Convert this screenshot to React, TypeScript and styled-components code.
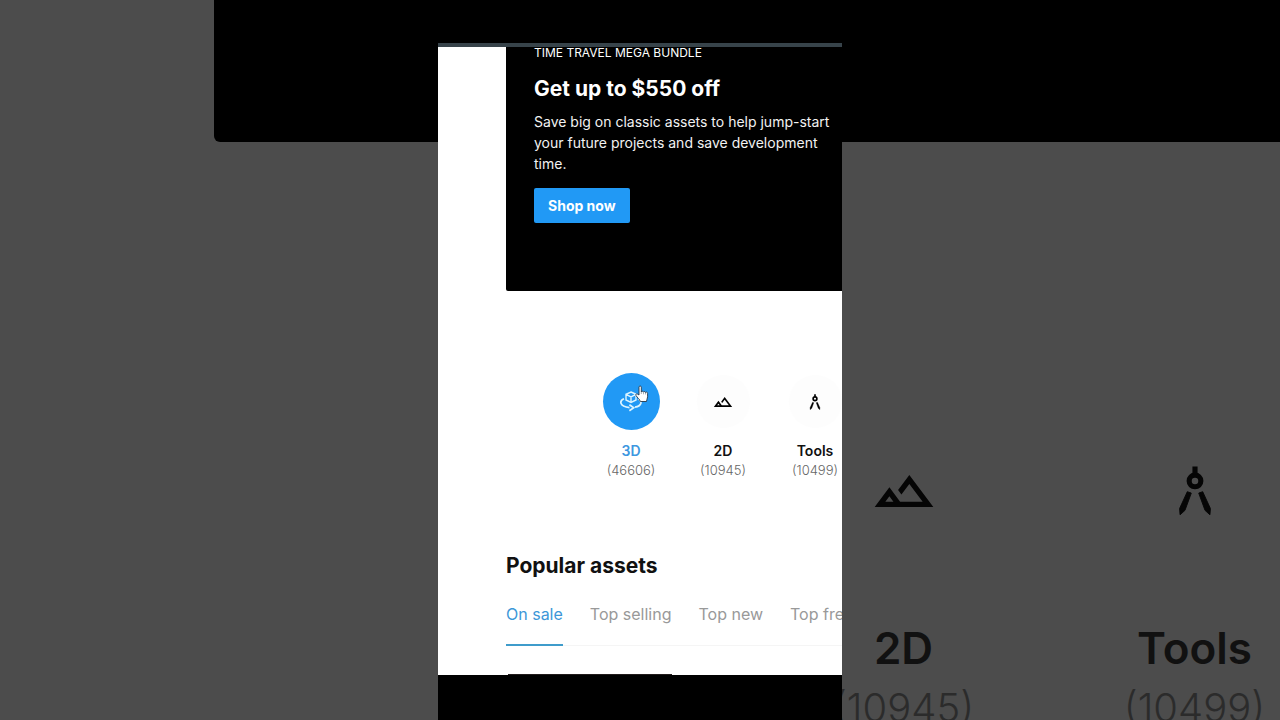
import React from "react";
import styled, { createGlobalStyle } from "styled-components";

const GlobalStyle = createGlobalStyle`
  * { box-sizing: border-box; }
  body {
    margin: 0;
    background: #4c4c4c;
    color: #111;
    font-family: Inter, "Liberation Sans", sans-serif;
  }
  h1, h2, p { margin: 0; }
  a { color: inherit; text-decoration: none; }
`;

const Stage = styled.div`
  display: grid;
  grid-template-columns: minmax(0, 1fr) minmax(0, 404px) minmax(0, 1fr);
  grid-template-rows: minmax(0, 1fr);
  height: 100vh;
  overflow: hidden;
`;

const Side = styled.aside`
  display: flex;
  flex-direction: column;
  min-width: 0;
  overflow: hidden;
`;

const SideBanner = styled.div<{ $start?: boolean }>`
  flex: none;
  height: 142px;
  margin-left: ${(p) => (p.$start ? "214px" : "0")};
  border-bottom-left-radius: ${(p) => (p.$start ? "6px" : "0")};
  background: #000;
`;

const Screen = styled.main`
  display: flex;
  flex-direction: column;
  min-width: 0;
  background: #000;
`;

const TopBar = styled.div`
  flex: none;
  margin-top: 43px;
  height: 4px;
  background: #37434a;
`;

const Page = styled.div`
  flex: 1;
  min-height: 0;
  margin-bottom: 45px;
  padding-left: 68px;
  overflow: hidden;
  background: #fff;
`;

const Banner = styled.section`
  height: 244px;
  padding-left: 28px;
  border-bottom-left-radius: 2px;
  background: #000;
  color: #fff;
`;

const Eyebrow = styled.p`
  font-size: 12px;
  line-height: 12px;
`;

const BannerTitle = styled.h1`
  margin-top: 16px;
  font-size: 21px;
  font-weight: 700;
  line-height: 28px;
`;

const BannerText = styled.p`
  max-width: 304px;
  margin-top: 8px;
  color: #f2f2f2;
  font-size: 14px;
  line-height: 21px;
`;

const ShopButton = styled.button`
  margin-top: 14px;
  height: 35px;
  padding: 0 14px;
  border: 0;
  border-radius: 2px;
  background: #2199f5;
  color: #fff;
  font: 700 14px/20px Inter, "Liberation Sans", sans-serif;
`;

const Categories = styled.nav<{ $large?: boolean }>`
  display: flex;
  flex: none;
  margin-top: ${(p) => (p.$large ? "260px" : "82px")};
  margin-left: ${(p) => (p.$large ? "-84px" : "79px")};
`;

const Category = styled.a<{ $large?: boolean; $active?: boolean }>`
  display: flex;
  flex: none;
  flex-direction: column;
  align-items: center;
  width: ${(p) => (p.$large ? "291px" : "92px")};
  color: ${(p) => (p.$active ? "#3d97e0" : "#111")};
`;

const IconDisc = styled.span<{ $large?: boolean; $active?: boolean }>`
  position: relative;
  display: grid;
  place-items: center;
  width: ${(p) => (p.$large ? "178px" : p.$active ? "57px" : "53px")};
  height: ${(p) => (p.$large ? "178px" : p.$active ? "57px" : "53px")};
  margin: ${(p) => (p.$large || p.$active ? "0" : "2px")};
  border-radius: 50%;
  background: ${(p) => (p.$large ? "transparent" : p.$active ? "#2199f5" : "#fdfdfd")};
  color: ${(p) => (p.$large ? "#050505" : "#000")};
`;

const CategoryName = styled.span<{ $large?: boolean }>`
  margin-top: ${(p) => (p.$large ? "38px" : "11px")};
  font-size: ${(p) => (p.$large ? "44px" : "14px")};
  font-weight: 600;
  line-height: ${(p) => (p.$large ? "60px" : "20px")};
`;

const CategoryCount = styled.span<{ $large?: boolean }>`
  color: ${(p) => (p.$large ? "#2b2b2b" : "#666")};
  font-size: ${(p) => (p.$large ? "40px" : "13px")};
  font-weight: 300;
  line-height: ${(p) => (p.$large ? "60px" : "19px")};
`;

const Pointer = styled.svg`
  position: absolute;
  top: 12px;
  left: 32px;
`;

const SectionTitle = styled.h2`
  margin-top: 72px;
  font-size: 21px;
  font-weight: 700;
  line-height: 28px;
`;

const Tabs = styled.nav`
  display: flex;
  gap: 27px;
  margin-top: 19px;
  box-shadow: inset 0 -1px #f5f5f5;
`;

const Tab = styled.a<{ $active?: boolean }>`
  flex: none;
  height: 47px;
  border-bottom: ${(p) => (p.$active ? "2px solid #3f9ccb" : "0")};
  color: ${(p) => (p.$active ? "#3d97d8" : "#999")};
  font-size: 16px;
  line-height: 30px;
  white-space: nowrap;
`;

const AssetCard = styled.div`
  width: 164px;
  height: 120px;
  margin: 28px 0 0 2px;
  background: #211b1b;
`;

function LandscapeIcon({ size }: { size: number }) {
  return (
    <svg width={size} height={size} viewBox="0 0 24 24" fill="currentColor" aria-hidden="true">
      <path d="m14 6-4.22 5.63 1.25 1.67L14 9.33 19 16h-8.46l-4.01-5.37L1 18h22L14 6zM5 16l1.52-2.03L8.04 16H5z" />
    </svg>
  );
}

function CompassIcon({ size }: { size: number }) {
  return (
    <svg width={size} height={size} viewBox="0 0 24 24" fill="none" stroke="currentColor" aria-hidden="true">
      <circle cx="12" cy="7.7" r="2.5" strokeWidth="2.2" />
      <path d="M12 1.5v3.6" strokeWidth="2.2" />
      <path
        d="m8.7 12.3 1.7.6-2.7 7.400-2.100 1.900-.2-2.700zM15.300 12.300l-1.700.6 2.700 7.400 2.100 1.900.2-2.700z"
        fill="currentColor"
        stroke="currentColor"
        strokeWidth=".4"
      />
    </svg>
  );
}

function RotateCubeIcon({ size }: { size: number }) {
  return (
    <svg width={size} height={size} viewBox="0 0 24 24" fill="none" stroke="#dcf4ff" strokeWidth="1.4" aria-hidden="true">
      <path d="M12 2l5 2.300v5.700l-5 2.400-5-2.400V4.300zM7 4.300l5 2.600 5-2.600M12 6.900v5.500" />
      <path d="M5 8.700C.2 10.800.2 16.400 10.500 17.600M19 8.700c4.400 2.200 4.300 7-3 8.500" strokeWidth="1.700" />
      <path d="m10.400 14.800 4.300 3-4.300 3" strokeWidth="1.700" />
    </svg>
  );
}

function HandPointer() {
  return (
    <Pointer width="14" height="18" viewBox="0 0 14 18" aria-hidden="true">
      <path
        d="M4 10V2.200C4 .6 6.300.6 6.300 2.200V7c.3-1.200 2-1 2.200.2.400-1 2-.8 2.100.4.500-.9 2-.5 2 .7v3.500c0 2-1.100 2.700-1.100 4.700H5.300c-.3-2-3-3.800-4.300-6-.7-1.400.8-2.200 1.700-1.300z"
        fill="#fff"
        stroke="#26394a"
        strokeWidth=".9"
      />
      <path d="M6.300 7v2M8.500 7.500v1.800M10.600 8v1.500" stroke="#26394a" strokeWidth=".4" />
    </Pointer>
  );
}

const categories = [
  { name: "3D", count: "(46606)", Icon: RotateCubeIcon, small: 24, large: 72, active: true },
  { name: "2D", count: "(10945)", Icon: LandscapeIcon, small: 20, large: 64, active: false },
  { name: "Tools", count: "(10499)", Icon: CompassIcon, small: 18, large: 56, active: false },
];

function CategoryList({ large }: { large?: boolean }) {
  const shown = large ? categories.filter((c) => !c.active) : categories;
  return (
    <Categories $large={large} aria-label="Categories">
      {shown.map(({ name, count, Icon, active, ...sizes }) => (
        <Category key={name} href="#" $large={large} $active={active}>
          <IconDisc $large={large} $active={active}>
            <Icon size={large ? sizes.large : sizes.small} />
            {active && <HandPointer />}
          </IconDisc>
          <CategoryName $large={large}>{name}</CategoryName>
          <CategoryCount $large={large}>{count}</CategoryCount>
        </Category>
      ))}
    </Categories>
  );
}

const tabs = ["On sale", "Top selling", "Top new", "Top free"];

export default function App() {
  return (
    <>
      <GlobalStyle />
      <Stage>
        <Side>
          <SideBanner $start />
        </Side>
        <Screen>
          <TopBar />
          <Page>
            <Banner>
              <Eyebrow>TIME TRAVEL MEGA BUNDLE</Eyebrow>
              <BannerTitle>Get up to $550 off</BannerTitle>
              <BannerText>
                Save big on classic assets to help jump-start your future projects and save development time.
              </BannerText>
              <ShopButton type="button">Shop now</ShopButton>
            </Banner>
            <CategoryList />
            <SectionTitle>Popular assets</SectionTitle>
            <Tabs aria-label="Popular assets">
              {tabs.map((label, i) => (
                <Tab key={label} href="#" $active={i === 0}>
                  {label}
                </Tab>
              ))}
            </Tabs>
            <AssetCard />
          </Page>
        </Screen>
        <Side>
          <SideBanner />
          <CategoryList large />
        </Side>
      </Stage>
    </>
  );
}
